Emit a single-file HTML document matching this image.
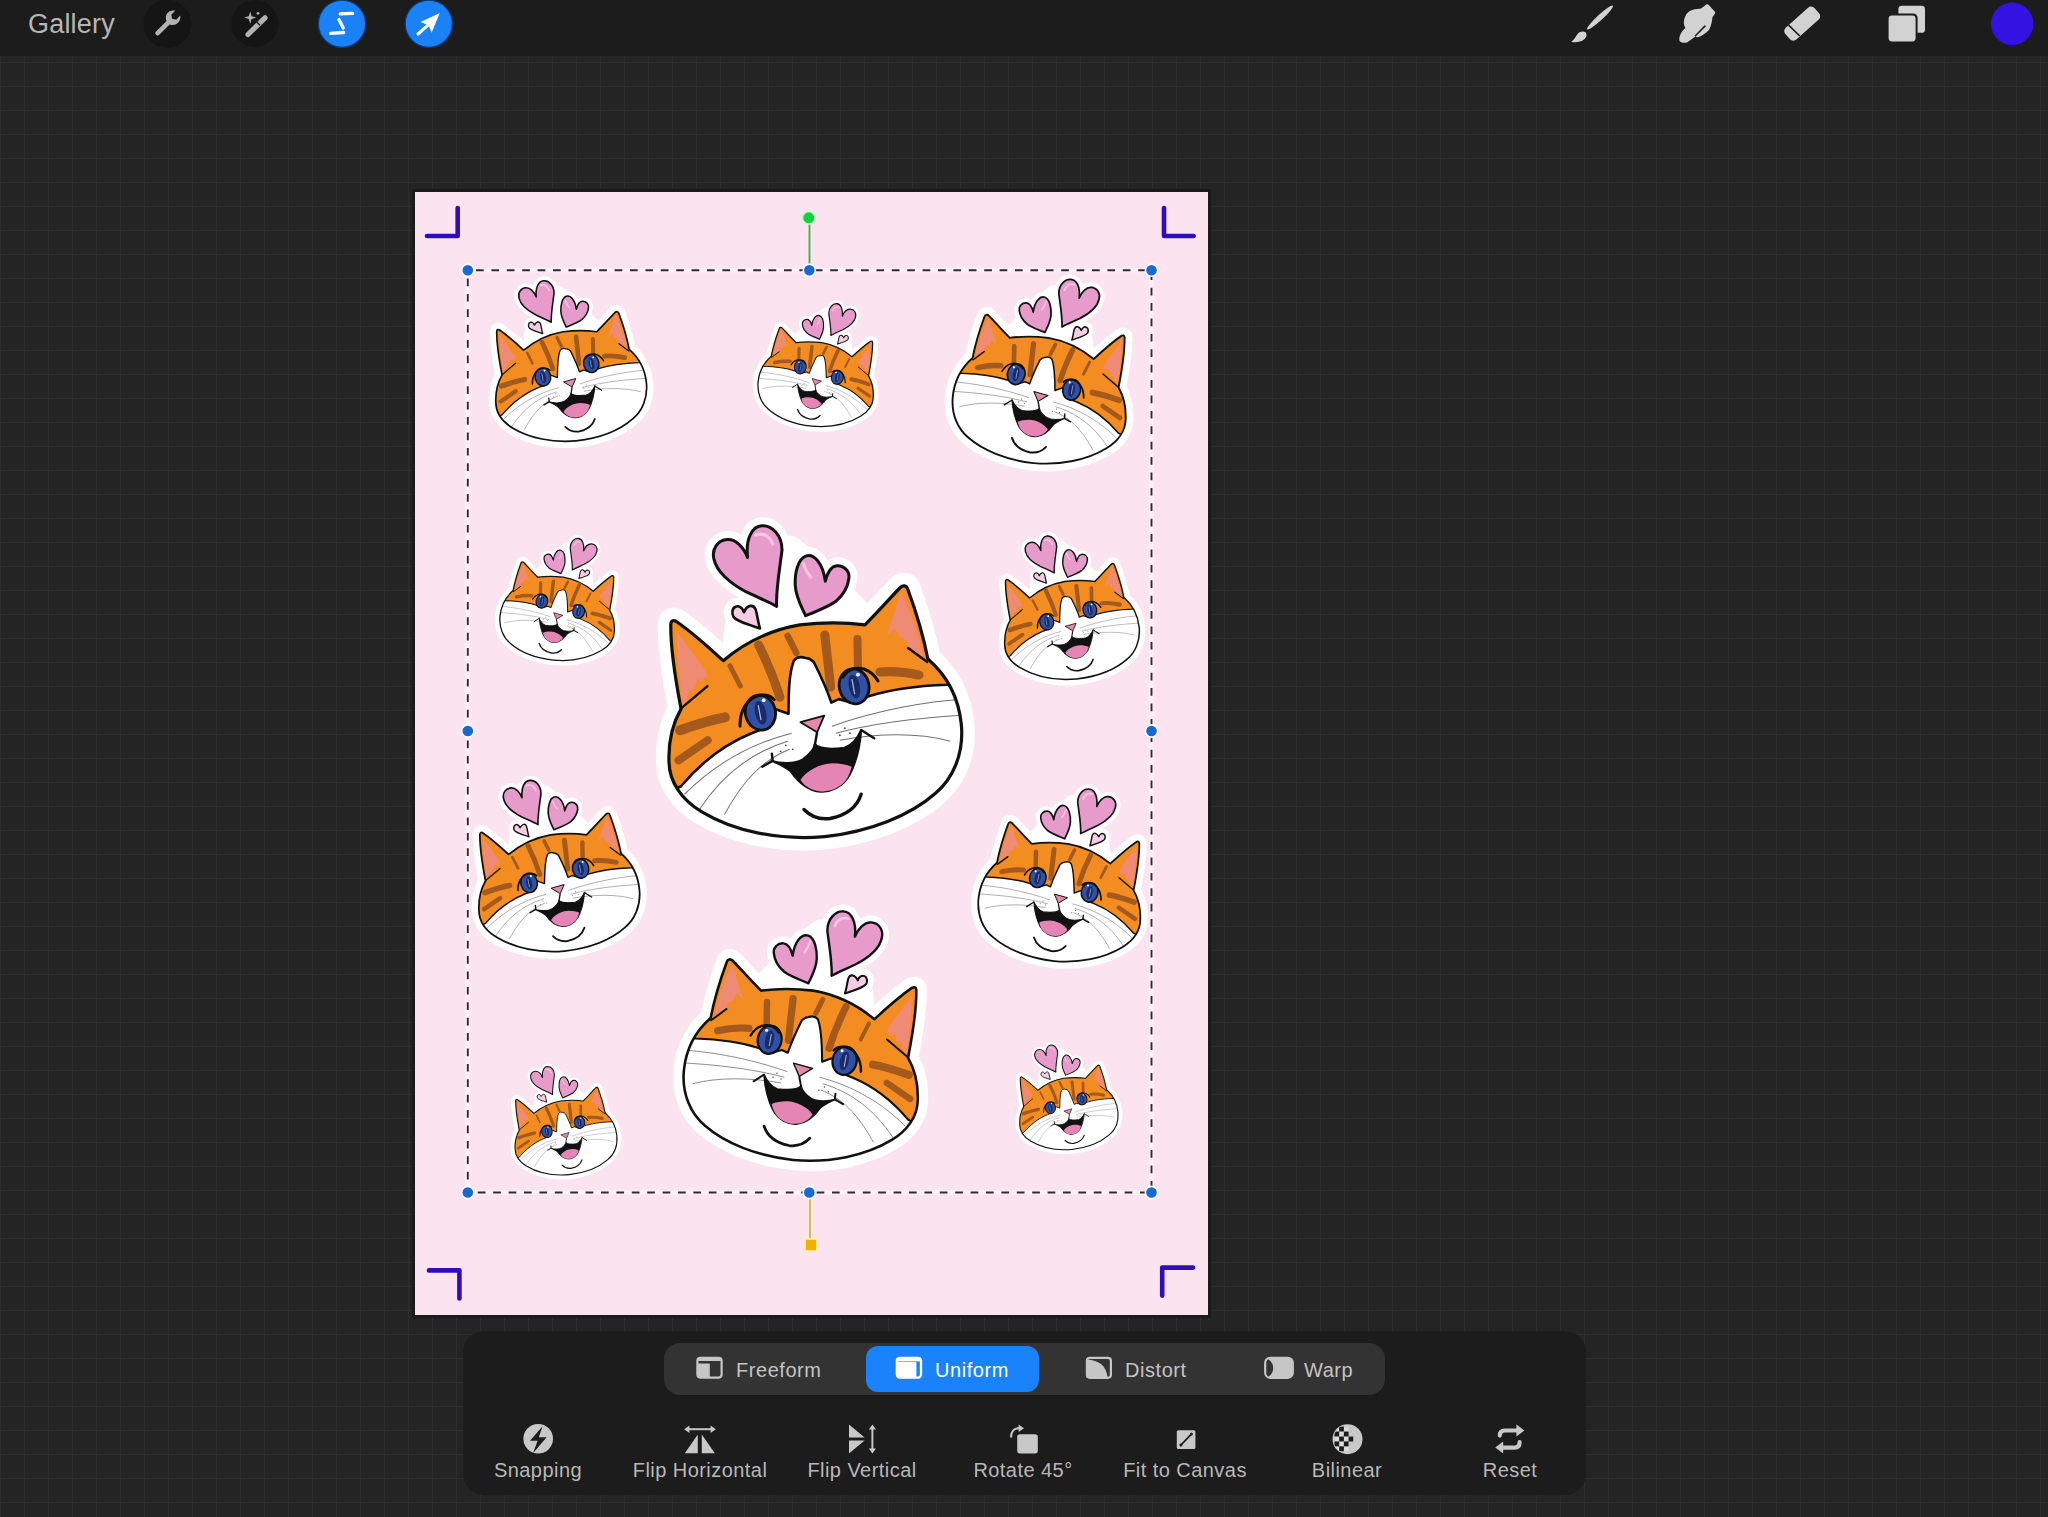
<!DOCTYPE html>
<html><head><meta charset="utf-8">
<style>
html,body{margin:0;padding:0;width:2048px;height:1517px;overflow:hidden;background:#242424;font-family:"Liberation Sans",sans-serif;}
#grid{position:absolute;left:0;top:0;width:2048px;height:1517px;
background-image:linear-gradient(to right,#2e2e2e 0,#2e2e2e 1.5px,transparent 1.5px),linear-gradient(to bottom,#2e2e2e 0,#2e2e2e 1.5px,transparent 1.5px);
background-size:24px 24px;background-position:0px 14px;}
#top{position:absolute;left:0;top:0;width:2048px;height:56px;background:#1c1c1c;}
.t{position:absolute;white-space:nowrap;}
#gal{left:28px;top:9px;font-size:27px;color:#b6b6b6;letter-spacing:0.2px;}
.circ{position:absolute;border-radius:50%;}
#paper{position:absolute;left:414.5px;top:192px;width:793.5px;height:1123px;background:#fbe4f0;box-shadow:0 0 0 3px #1a1a1a;}
#ov{position:absolute;left:0;top:0;}
#panel{position:absolute;left:463px;top:1331px;width:1122.5px;height:163.5px;background:#1c1c1c;border-radius:21px;}
#seg{position:absolute;left:664px;top:1343px;width:721px;height:52px;background:#333333;border-radius:16px;}
#uni{position:absolute;left:866px;top:1346px;width:173px;height:46px;background:#1a82fa;border-radius:12px;}
.sl{font-size:20px;color:#c4c4c4;top:1358.5px;letter-spacing:0.55px;}
.bl{font-size:20px;color:#b8b8b8;top:1459px;letter-spacing:0.45px;transform:translateX(-50%);}
</style></head><body>
<div id="grid"></div>
<div id="top">
  <div class="t" id="gal">Gallery</div>
</div>
<div id="paper"></div>
<div id="panel"></div>
<div id="seg"></div>
<div id="uni"></div>
<div class="t sl" style="left:736px">Freeform</div>
<div class="t sl" style="left:935px;color:#fff">Uniform</div>
<div class="t sl" style="left:1125px">Distort</div>
<div class="t sl" style="left:1304px">Warp</div>
<div class="t bl" style="left:538px">Snapping</div>
<div class="t bl" style="left:700px">Flip Horizontal</div>
<div class="t bl" style="left:862px">Flip Vertical</div>
<div class="t bl" style="left:1023px">Rotate 45°</div>
<div class="t bl" style="left:1185px">Fit to Canvas</div>
<div class="t bl" style="left:1347px">Bilinear</div>
<div class="t bl" style="left:1510px">Reset</div>
<svg id="ov" width="2048" height="1517" viewBox="0 0 2048 1517">
<defs>
<g id="catart">
  <!-- sticker white border -->
  <g fill="#ffffff" stroke="#ffffff" stroke-width="26" stroke-linejoin="round">
    <path d="M 31.5 115 C 31.8 111.5, 34.5 111, 37 112.6 C 55 125, 70 139, 83.7 151.7 C 100 138, 125 122, 160 116 C 185 113, 210 114, 225 116 C 240 101, 252 87, 260.5 78.5 C 263 76, 266.5 77, 267.5 80 C 276 103, 283 126, 287.7 150 C 305 165, 318 185, 321 215 C 324 245, 312 270, 295 284 C 270 306, 230 322, 185 327 C 140 331, 95 322, 62 302 C 42 290, 30 272, 29.7 252.8 C 29 235, 33 215, 41.7 199.7 C 36 170, 31 140, 31.5 115 Z"/>
    <polygon points="96,140 98,118 112,100 130,70 150,40 170,55 200,85 228,114 160,116"/>
</g>
<g fill="#ffffff" stroke="#ffffff" stroke-width="17" stroke-linejoin="round" transform="translate(0 2.5)">
    <path d="M 108 46.3 C 104 36, 96 28, 88 28.5 C 78 29, 72 38, 74.5 48 C 77 60, 90 72, 106.8 80.7 C 118 86, 128 90, 137 95 C 136 80, 140 58, 142.3 39.1 C 142.5 24, 132 14, 122.2 14.8 C 112 15.5, 106 28, 108 46.3 Z"/>
    <path d="M 185.5 70 C 188 60, 192 55, 197 54.6 C 204 54, 210 60, 209 67 C 208 76, 203 84, 196 90 C 188 96, 176 100, 165.9 104.4 C 162 96, 156 86, 155.5 74 C 155 62, 158 48, 166 45 C 174 42, 183 52, 185.5 70 Z"/>
    <path d="M 104.4 100.8 C 103 96, 99 94, 96 95.5 C 92.5 97, 92 102, 94 105.5 C 97 110, 108 113, 120.4 117 C 118 110, 118 104, 116 98 C 114 93, 108 93, 104.4 100.8 Z"/>
</g>
  <!-- head -->
  <clipPath id="headclip"><path id="headp" d="M 31.5 115 C 31.8 111.5, 34.5 111, 37 112.6 C 55 125, 70 139, 83.7 151.7 C 100 138, 125 122, 160 116 C 185 113, 210 114, 225 116 C 240 101, 252 87, 260.5 78.5 C 263 76, 266.5 77, 267.5 80 C 276 103, 283 126, 287.7 150 C 305 165, 318 185, 321 215 C 324 245, 312 270, 295 284 C 270 306, 230 322, 185 327 C 140 331, 95 322, 62 302 C 42 290, 30 272, 29.7 252.8 C 29 235, 33 215, 41.7 199.7 C 36 170, 31 140, 31.5 115 Z"/></clipPath>
  <use href="#headp" fill="#f38d22"/>
  <g clip-path="url(#headclip)">
    <path d="M 37.4 122.6 C 50 140, 60 152, 68 166 L 62 172 L 58 170 L 55 180 L 50 182 L 44 198 C 40 170, 37 145, 37.4 122.6 Z" fill="#ef8b74"/>
    <path d="M 260.8 83 C 270 100, 278 125, 283.4 148 L 268 138 L 266 131 L 260 128 L 255 119 L 247 127 Z" fill="#ef8b74"/>
    <g stroke="#a35a1c" stroke-linecap="round" fill="none">
      <path d="M 90.5 156.8 L 100.8 177" stroke-width="5"/>
      <path d="M 119 136 C 126 150, 134 168, 140.2 188" stroke-width="9"/>
      <path d="M 148 127 L 156.6 144" stroke-width="6.5"/>
      <path d="M 185 126 C 187 145, 189 160, 190.8 178" stroke-width="9"/>
      <path d="M 217.5 130 L 218 158" stroke-width="8"/>
      <path d="M 240 163 C 252 162, 266 163, 279 166" stroke-width="9"/>
      <path d="M 40.8 221 C 55 216, 70 211, 85.4 208.2" stroke-width="10"/>
      <path d="M 39.1 251 L 68.3 231" stroke-width="8"/>
    </g>
    <path d="M 10 292 L 41.7 276.8 C 60 255, 85 235, 112 224 L 127 218 L 136 200 L 148.8 204.6 C 149 185, 149 165, 154 152 C 157 147, 163 148, 166 149 C 170 149, 172 151, 174 153 C 180 165, 187 180, 191.5 193.4 L 199 190 L 214 194 L 228 187.4 C 245 182, 270 177, 306.6 175.7 L 340 172 L 340 340 L 10 340 Z" fill="#ffffff" stroke="#111" stroke-width="2.6" stroke-linejoin="round"/>
    <g stroke="#707070" stroke-width="1" fill="none">
      <path d="M 152 224 C 120 232, 80 250, 45 285"/>
      <path d="M 148 232 C 115 242, 85 262, 60 300"/>
      <path d="M 150 240 C 125 250, 105 268, 85 305"/>
      <path d="M 192 217 C 240 200, 290 192, 322 190"/>
      <path d="M 196 224 C 240 212, 290 208, 322 206"/>
      <path d="M 200 231 C 240 224, 280 224, 310 232"/>
    </g>
  </g>
  <path d="M 42 199 L 68 177" stroke="#111" stroke-width="2.4" fill="none" stroke-linecap="round"/>
  <path d="M 268 139 L 287 153" stroke="#111" stroke-width="2.4" fill="none" stroke-linecap="round"/>
  <use href="#headp" fill="none" stroke="#111" stroke-width="3.2" stroke-linejoin="round"/>
  <!-- eyes -->
  <g stroke="#111" stroke-width="2.8">
    <ellipse cx="120.8" cy="203.4" rx="15" ry="17.6" fill="#3152a4" transform="rotate(-12 120.8 203.4)"/>
    <ellipse cx="214.2" cy="177.2" rx="14.8" ry="17.6" fill="#3152a4" transform="rotate(-12 214.2 177.2)"/>
  </g>
  <ellipse cx="121" cy="203.6" rx="5.5" ry="12" fill="#1a2a66" transform="rotate(-12 121 203.6)"/>
  <ellipse cx="214.4" cy="177.4" rx="5.5" ry="12" fill="#1a2a66" transform="rotate(-12 214.4 177.4)"/>
  <path d="M 118.6 196 L 121.4 211 M 212 170 L 214.8 185" stroke="#c8d4ff" stroke-width="1.3" opacity="0.8"/>
  <circle cx="124" cy="191" r="1.9" fill="#fff"/>
  <circle cx="218" cy="165.5" r="1.9" fill="#fff"/>
  <path d="M 100.5 217 C 100 201, 108 188, 122 186 C 128 185.6, 132 187.5, 134.5 190.5" stroke="#111" stroke-width="3" fill="none" stroke-linecap="round"/>
  <path d="M 203 168 C 208 160, 216 158, 224 160 C 230 162, 235 167, 238 172" stroke="#111" stroke-width="3" fill="none" stroke-linecap="round"/>
  <!-- nose mouth -->
  <path d="M 160.7 213 L 184.4 206.4 L 177.3 223 Z" fill="#e48aa8" stroke="#111" stroke-width="1.8" stroke-linejoin="round"/>
  <path d="M 177.3 223 L 175 236" stroke="#111" stroke-width="2.4"/>
  <path d="M 132 251.5 C 140 254, 155 255, 163 250 C 170 245, 174 240, 175 235 C 180 240, 192 240, 204.6 238.5 C 212 236, 218 228, 221.2 220.7 C 220 240, 215 255, 210 265 C 203 278, 190 283, 180.8 282.3 C 168 281, 158 272, 151.2 262.2 C 145 257, 138 254, 132 251.5 Z" fill="#111" stroke="#111" stroke-width="2" stroke-linejoin="round"/>
  <path d="M 160.7 270.5 C 166 262, 180 254, 192.7 253.9 C 200 254, 207 255, 211.7 257.4 C 210 265, 206 272, 204 273 C 197 280, 189 282, 181 282 C 172 281, 165 277, 160.7 270.5 Z" fill="#e585b4"/>
  <path d="M 122.7 257.4 L 133 251.5 L 132.2 244.4 M 221.2 220.7 L 234.2 229" stroke="#111" stroke-width="2.4" fill="none" stroke-linecap="round"/>
  <path d="M 164.2 300 C 172 308, 182 310, 190 309 C 205 306, 217 298, 221.2 284.7" stroke="#111" stroke-width="3.4" fill="none" stroke-linecap="round"/>
  <g fill="#444"><circle cx="146" cy="236" r="0.9"/><circle cx="141" cy="242" r="0.9"/><circle cx="153" cy="240" r="0.9"/><circle cx="205" cy="219" r="0.9"/><circle cx="210" cy="224" r="0.9"/><circle cx="200" cy="226" r="0.9"/></g>
  <!-- hearts -->
  <g stroke="#111" stroke-linejoin="round" transform="translate(0 2.5)">
    <path d="M 108 46.3 C 104 36, 96 28, 88 28.5 C 78 29, 72 38, 74.5 48 C 77 60, 90 72, 106.8 80.7 C 118 86, 128 90, 137 95 C 136 80, 140 58, 142.3 39.1 C 142.5 24, 132 14, 122.2 14.8 C 112 15.5, 106 28, 108 46.3 Z" fill="#e79bcb" stroke-width="3"/>
    <path d="M 185.5 70 C 188 60, 192 55, 197 54.6 C 204 54, 210 60, 209 67 C 208 76, 203 84, 196 90 C 188 96, 176 100, 165.9 104.4 C 162 96, 156 86, 155.5 74 C 155 62, 158 48, 166 45 C 174 42, 183 52, 185.5 70 Z" fill="#e79bcb" stroke-width="3"/>
    <path d="M 104.4 100.8 C 103 96, 99 94, 96 95.5 C 92.5 97, 92 102, 94 105.5 C 97 110, 108 113, 120.4 117 C 118 110, 118 104, 116 98 C 114 93, 108 93, 104.4 100.8 Z" fill="#f5cde2" stroke-width="2.6"/>
    <path d="M 116 24 C 123 21, 130 25, 133 33" stroke="#f6c6e4" stroke-width="3.2" fill="none" stroke-linecap="round"/>
    <path d="M 163.5 52 C 165 57, 167.5 62, 171 66" stroke="#f6c6e4" stroke-width="2.8" fill="none" stroke-linecap="round"/>
  </g>
</g>
<path id="heart" d="M0,-0.45 C-0.2,-1.05 -1.05,-0.95 -1,-0.2 C-0.95,0.35 -0.35,0.6 0,1 C0.35,0.6 0.95,0.35 1,-0.2 C1.05,-0.95 0.2,-1.05 0,-0.45 Z"/>
</defs>

<clipPath id="paperclip"><rect x="414" y="192" width="794" height="1123"/></clipPath>
<g clip-path="url(#paperclip)">
<use href="#catart" transform="translate(480.44 271.78) scale(0.5171)"/>
<use href="#catart" transform="translate(885.07 296.86) scale(-0.3955 0.3955)"/>
<use href="#catart" transform="translate(1143.31 269.03) scale(-0.5935 0.5935)"/>
<use href="#catart" transform="translate(626.09 531.66) scale(-0.3928 0.3928)"/>
<use href="#catart" transform="translate(639.20 508.48) scale(1.0034)"/>
<use href="#catart" transform="translate(990.98 527.98) scale(0.4616)"/>
<use href="#catart" transform="translate(462.54 770.86) scale(0.5510)"/>
<use href="#catart" transform="translate(1156.79 779.40) scale(-0.5555 0.5555)"/>
<use href="#catart" transform="translate(941.58 897.50) scale(-0.8027 0.8027)"/>
<use href="#catart" transform="translate(504.70 1060.42) scale(0.3493)"/>
<use href="#catart" transform="translate(1009.65 1039.16) scale(0.3373)"/>
</g>
<!-- dashed selection -->
<rect x="467.8" y="270.2" width="683.7" height="922.3" fill="none" stroke="#ffffff" stroke-opacity="0.45" stroke-width="4.5"/>
<rect x="467.8" y="270.2" width="683.7" height="922.3" fill="none" stroke="#35292f" stroke-width="1.9" stroke-dasharray="7.7 7.7" stroke-dashoffset="-8.2"/>
<g stroke="#300cbc" stroke-width="4.6" stroke-linecap="round" stroke-linejoin="round" fill="none">
<path d="M 427 236 L 457.7 236 L 457.7 208"/>
<path d="M 1164 208 L 1164 236 L 1193.7 236"/>
<path d="M 429 1270.4 L 459.4 1270.4 L 459.4 1298.4"/>
<path d="M 1162.2 1295.6 L 1162.2 1267.6 L 1193 1267.6"/>
</g>
<line x1="809.5" y1="218" x2="809.5" y2="270" stroke="#e0ffd8" stroke-width="4"/>
<line x1="809.5" y1="218" x2="809.5" y2="270" stroke="#6e9a6c" stroke-width="2"/>
<line x1="810" y1="1192" x2="810" y2="1242" stroke="#fff2d0" stroke-width="4"/>
<line x1="810" y1="1192" x2="810" y2="1242" stroke="#d8b468" stroke-width="2"/>
<circle cx="808.8" cy="217.8" r="6.3" fill="#14d040" stroke="#c8f7c8" stroke-width="1.6"/>
<rect x="805" y="1239" width="12" height="12" rx="1.5" fill="#f2b000" stroke="#fff3a8" stroke-width="1.6"/>
<g fill="#1b68d0" stroke="#f4fbff" stroke-width="1.6">
<circle cx="467.8" cy="270.2" r="6.1"/><circle cx="809.3" cy="270.2" r="6.1"/><circle cx="1151.5" cy="270.2" r="6.1"/>
<circle cx="467.8" cy="731" r="6.1"/><circle cx="1151.5" cy="731" r="6.1"/>
<circle cx="467.8" cy="1192.5" r="6.1"/><circle cx="809.3" cy="1192.5" r="6.1"/><circle cx="1151.5" cy="1192.5" r="6.1"/>
</g>
<!-- top bar icons -->
<circle cx="167.5" cy="23.8" r="24" fill="#151515"/>
<circle cx="255" cy="23.6" r="23.5" fill="#151515"/>
<circle cx="342" cy="23.8" r="23.6" fill="#1a82f6" stroke="#0b3a78" stroke-width="1.2"/>
<circle cx="428.8" cy="23.8" r="23.6" fill="#1a82f6" stroke="#0b3a78" stroke-width="1.2"/>
<g fill="#b2b2b2" stroke="none">
  <path d="M 157.6 33.2 L 168.5 22.3" stroke="#b2b2b2" stroke-width="4.6" stroke-linecap="round"/>
  <path d="M 166.2 20.2 C 164.8 15.5, 167.5 11, 172.5 10.4 L 175.4 10.6 L 171.3 14.8 L 172.2 18.8 L 176.2 19.7 L 180.3 15.6 C 181.2 20.8, 177.2 25.6, 171.8 25 C 170 24.8, 168.5 24, 167.8 23.2 Z"/>
</g>
<g>
  <path d="M 248 34.5 L 265 17.8" stroke="#b2b2b2" stroke-width="5.2" stroke-linecap="round"/>
  <path d="M 256 21.2 L 260 25.2" stroke="#151515" stroke-width="1.3"/>
  <path d="M 250.2 11.5 L 251.6 16.2 L 256.3 17.6 L 251.6 19 L 250.2 23.7 L 248.8 19 L 244.1 17.6 L 248.8 16.2 Z" fill="#b2b2b2"/>
  <circle cx="258" cy="13.3" r="1.4" fill="#b2b2b2"/>
</g>
<g stroke="#ffffff" stroke-width="3.3" stroke-linecap="round" fill="none">
  <path d="M 340.2 13.9 L 352.6 13.4"/>
  <path d="M 338.9 19.6 C 340.2 22, 341.8 25, 343.2 28"/>
  <path d="M 330.8 33.4 L 343.6 32.5"/>
</g>
<g fill="#ffffff">
  <path d="M 418 34 L 429 24.4" stroke="#ffffff" stroke-width="3.1" stroke-linecap="round"/>
  <path d="M 439.8 12.9 L 431.6 32.8 L 428.8 25.4 L 420.6 21.9 Z"/>
</g>
<!-- right tools -->
<g fill="#d2d2d2">
  <ellipse cx="1600" cy="17.6" rx="17.4" ry="2.7" transform="rotate(-42.7 1600 17.6)"/>
  <path d="M 1585.8 32.4 C 1588 36, 1585 40, 1580 41.6 C 1576 42.6, 1573 42.4, 1571.3 41.4 C 1575 39.6, 1575.5 36, 1578 33.4 C 1580 31.4, 1583.5 30.8, 1585.8 32.4 Z"/>
  <path d="M 1679.5 41 C 1678.5 36, 1682 31, 1685.4 28.1 C 1683.5 25, 1683.2 21, 1685 17 C 1686.5 13, 1689 11, 1692 10 C 1696 9, 1699 9, 1701 8.6 L 1706 4.7 C 1707 4, 1708 4.3, 1709 5.2 L 1714.7 11.5 C 1715.5 12.5, 1715.3 13.5, 1714.5 14.3 L 1712.5 17 C 1712 22, 1711 26, 1709 30 C 1706 33, 1702 36, 1698 37.2 C 1697 37.4, 1696 37, 1695.5 36.5 L 1687.3 42.2 C 1685 43.2, 1681 43, 1679.5 41 Z"/>
  <rect x="-19.5" y="-8" width="39" height="16" rx="4.5" transform="translate(1802.2 23.6) rotate(-41.8)"/>
  <rect x="1898.4" y="5.8" width="26.6" height="27" rx="3.4"/>
  <rect x="1886.6" y="13.4" width="31" height="30" rx="4.4" fill="#1c1c1c"/>
  <rect x="1888.6" y="15.4" width="27" height="26" rx="3.4"/>
</g>
<path d="M 1705.4 25.6 L 1695 36.2" stroke="#1c1c1c" stroke-width="1.5"/>
<path d="M 1788.6 25.2 L 1799.8 36" stroke="#1c1c1c" stroke-width="1.7"/>
<circle cx="2012.2" cy="23.8" r="21.2" fill="#3412e2"/>
<!-- segmented icons -->
<g>
  <rect x="697.4" y="1357.8" width="24.2" height="19.8" rx="3" fill="none" stroke="#c6c6c6" stroke-width="2.2"/>
  <rect x="697.4" y="1358.4" width="24.2" height="2.6" fill="#c6c6c6"/>
  <rect x="697.4" y="1363.6" width="12.4" height="14" rx="1" fill="#c6c6c6"/>
  <rect x="896.8" y="1357.8" width="24.2" height="19.8" rx="3" fill="none" stroke="#ffffff" stroke-width="2.3"/>
  <rect x="896.8" y="1358.4" width="24.2" height="3" fill="#ffffff"/>
  <rect x="896.8" y="1362" width="19.6" height="15.6" rx="1" fill="#ffffff"/>
  <rect x="1086.9" y="1357.8" width="24" height="20" rx="3" fill="none" stroke="#c6c6c6" stroke-width="2.2"/>
  <path d="M 1086.9 1359.6 C 1099 1360.5, 1106.5 1365.5, 1107.6 1378 L 1086.9 1378 Z" fill="#c6c6c6"/>
  <rect x="1265.2" y="1357.8" width="27.6" height="20" rx="5" fill="none" stroke="#c6c6c6" stroke-width="2.2"/>
  <path d="M 1268 1358.8 L 1289 1358.8 C 1292 1358.8, 1292.8 1361, 1292.8 1363.5 L 1292.8 1372.5 C 1292.8 1375, 1292 1377.6, 1289 1377.6 L 1268 1377.6 C 1272 1374, 1273.2 1371, 1273.2 1368.2 C 1273.2 1365, 1272 1362, 1268 1358.8 Z" fill="#c6c6c6"/>
</g>
<!-- bottom tool icons -->
<g fill="#c8c8c8">
  <circle cx="538.2" cy="1438.8" r="14.8"/>
  <path d="M 542.6 1426.2 L 530 1440.8 L 537.6 1440.8 L 533 1453.2 L 546.6 1437.2 L 538.8 1437.2 Z" fill="#1c1c1c"/>
  <path d="M 686 1429.2 L 714 1429.2" stroke="#c8c8c8" stroke-width="2"/>
  <path d="M 684.2 1429.2 L 689.4 1425.4 L 689.4 1433 Z M 715.8 1429.2 L 710.6 1425.4 L 710.6 1433 Z"/>
  <path d="M 697.8 1434.4 L 697.8 1453.2 L 684.8 1453.2 Z M 701.8 1434.4 L 701.8 1453.2 L 714.8 1453.2 Z"/>
  <path d="M 849 1424.4 L 864.6 1437.6 L 849 1437.6 Z M 849 1440.6 L 864.6 1440.6 L 849 1453.4 Z"/>
  <path d="M 872.4 1427 L 872.4 1451" stroke="#c8c8c8" stroke-width="2"/>
  <path d="M 872.4 1424.4 L 868.8 1429.4 L 876 1429.4 Z M 872.4 1453.6 L 868.8 1448.6 L 876 1448.6 Z"/>
  <rect x="1017.2" y="1434.2" width="20.6" height="19.2" rx="2.6"/>
  <path d="M 1011 1437.4 C 1011 1431.5, 1014.5 1428.2, 1019 1428.2" stroke="#c8c8c8" stroke-width="2.2" fill="none"/>
  <path d="M 1024 1428.2 L 1018.6 1424.4 L 1018.6 1432 Z"/>
  <rect x="1176.8" y="1430.2" width="18.6" height="18.8" rx="1.6"/>
  <path d="M 1180.4 1445.6 L 1191.8 1433.6" stroke="#1c1c1c" stroke-width="1.6"/>
  <circle cx="1347.5" cy="1439.2" r="15"/>
</g>
<clipPath id="bilclip"><circle cx="1347.5" cy="1439.2" r="14.2"/></clipPath>
<g clip-path="url(#bilclip)">
<rect x="1334.45" y="1426.55" width="4.7" height="4.9" fill="#dcdcdc"/><rect x="1343.85" y="1426.55" width="4.7" height="4.9" fill="#dcdcdc"/><rect x="1339.15" y="1431.55" width="4.7" height="4.9" fill="#dcdcdc"/><rect x="1334.45" y="1436.55" width="4.7" height="4.9" fill="#dcdcdc"/><rect x="1343.85" y="1436.55" width="4.7" height="4.9" fill="#dcdcdc"/><rect x="1339.15" y="1441.45" width="4.7" height="4.9" fill="#dcdcdc"/><rect x="1334.45" y="1446.35" width="4.7" height="4.9" fill="#dcdcdc"/><rect x="1343.85" y="1446.35" width="4.7" height="4.9" fill="#dcdcdc"/><rect x="1339.15" y="1426.55" width="4.7" height="4.9" fill="#1c1c1c"/><rect x="1334.45" y="1431.55" width="4.7" height="4.9" fill="#1c1c1c"/><rect x="1343.85" y="1431.55" width="4.7" height="4.9" fill="#1c1c1c"/><rect x="1339.15" y="1436.55" width="4.7" height="4.9" fill="#1c1c1c"/><rect x="1348.55" y="1436.55" width="4.7" height="4.9" fill="#1c1c1c"/><rect x="1334.45" y="1441.45" width="4.7" height="4.9" fill="#1c1c1c"/><rect x="1343.85" y="1441.45" width="4.7" height="4.9" fill="#1c1c1c"/><rect x="1339.15" y="1446.35" width="4.7" height="4.9" fill="#1c1c1c"/>
</g>
<g stroke="#c8c8c8" stroke-width="4.2" fill="none" stroke-linecap="round">
  <path d="M 1499.8 1435.6 C 1499.8 1432, 1501.6 1430.5, 1505 1430.5 L 1517 1430.5"/>
  <path d="M 1519.6 1442.2 C 1519.6 1446, 1517.8 1447.6, 1514.4 1447.6 L 1502 1447.6"/>
</g>
<g fill="#c8c8c8">
  <path d="M 1524.4 1430.5 L 1516.4 1424.4 L 1516.4 1436.6 Z"/>
  <path d="M 1495.2 1447.6 L 1503.2 1441.6 L 1503.2 1453.6 Z"/>
</g>
<g fill="#1c1c1c"><circle cx="1180.9" cy="1445" r="1.5"/><circle cx="1191.4" cy="1434" r="1.5"/></g>

</svg>
</body></html>
